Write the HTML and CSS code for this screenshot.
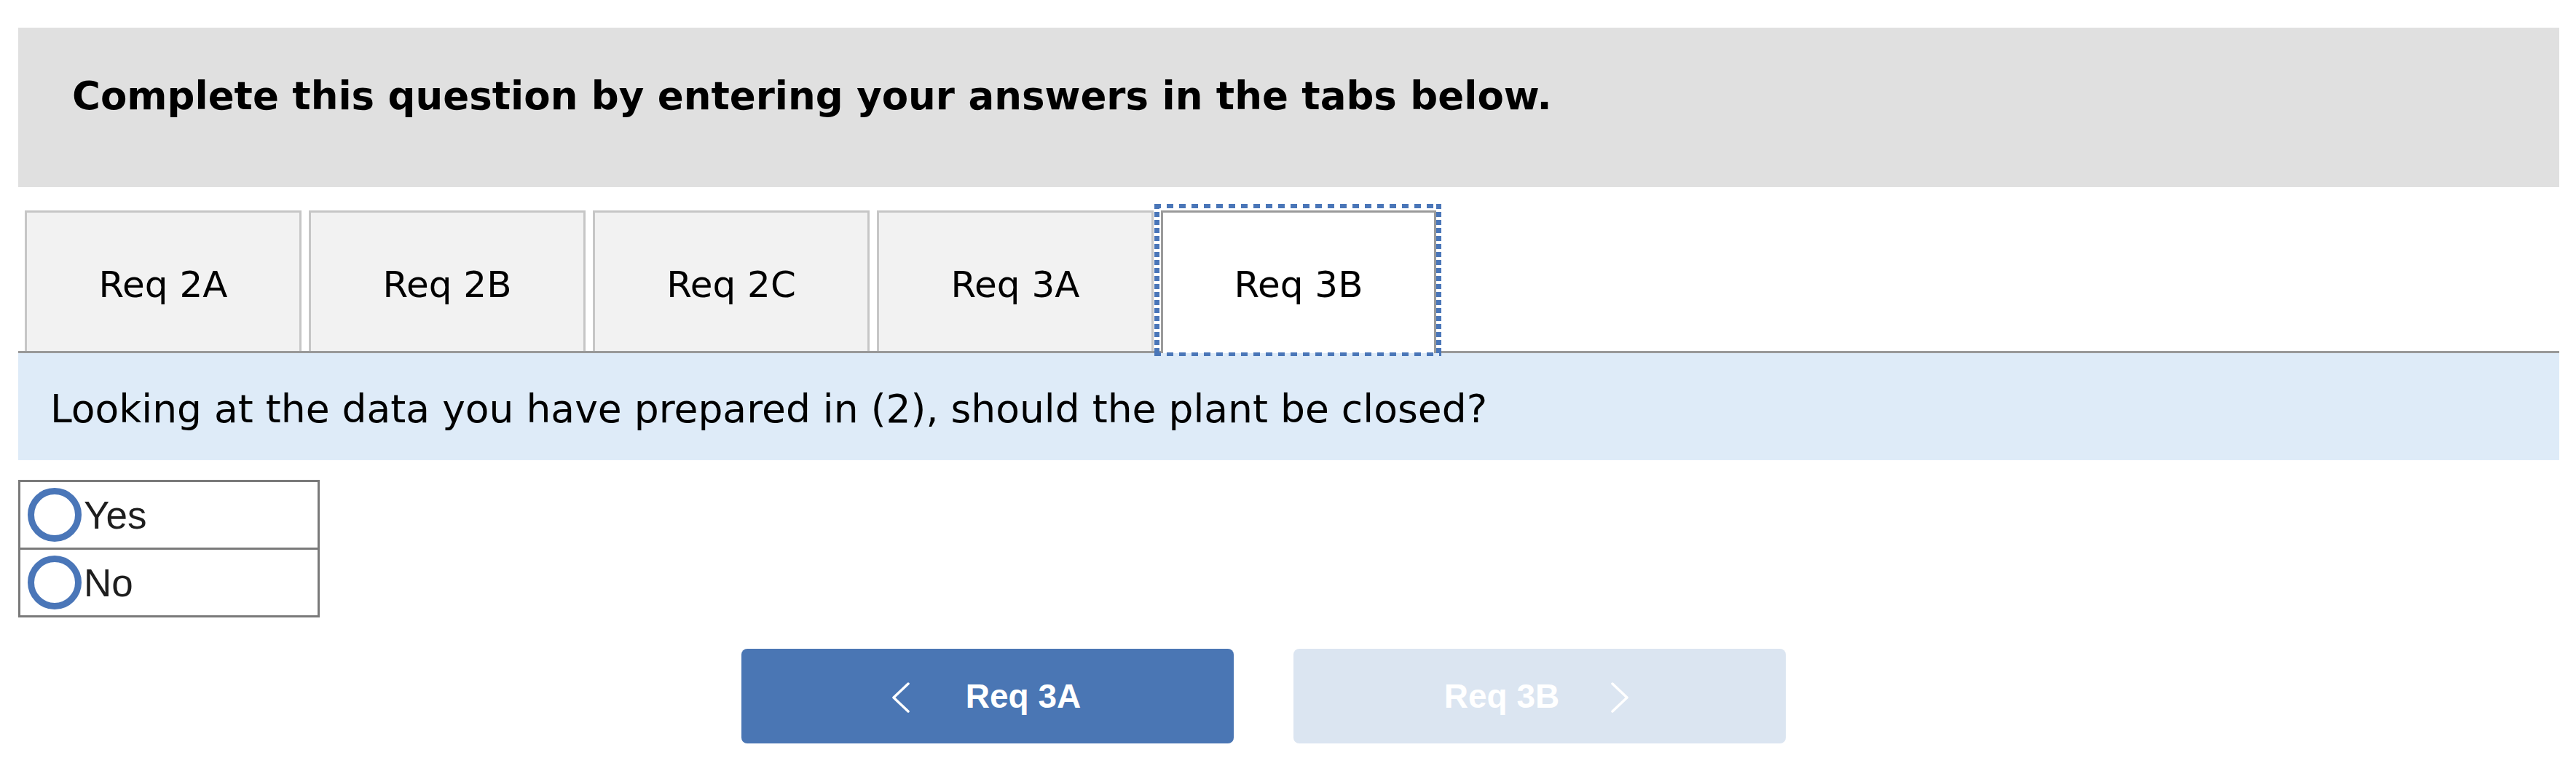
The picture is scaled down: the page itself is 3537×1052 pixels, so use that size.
FILE: index.html
```html
<!DOCTYPE html>
<html lang="en">
<head>
<meta charset="utf-8">
<title>Req 3B</title>
<link rel="stylesheet" href="styles.css">
</head>
<body>
<div class="page">
  <div class="header">Complete this question by entering your answers in the tabs below.</div>

  <div class="tabs">
    <div class="tab">Req 2A</div>
    <div class="tab">Req 2B</div>
    <div class="tab">Req 2C</div>
    <div class="tab">Req 3A</div>
    <div class="tab active">Req 3B</div>
  </div>

  <div class="question">Looking at the data you have prepared in (2), should the plant be closed?</div>

  <div class="choices">
    <label class="choice"><span class="radio"></span><span class="label">Yes</span></label>
    <label class="choice"><span class="radio"></span><span class="label">No</span></label>
  </div>

  <div class="nav">
    <button class="navbtn prev">
      <svg class="chev" width="26" height="42" viewBox="0 0 26 42"><polyline points="23,2 3,21 23,40" fill="none" stroke="#fff" stroke-width="3.5" stroke-linecap="round" stroke-linejoin="round"/></svg>
      <span>Req 3A</span>
    </button>
    <button class="navbtn next">
      <span>Req 3B</span>
      <svg class="chev" width="26" height="42" viewBox="0 0 26 42"><polyline points="3,2 23,21 3,40" fill="none" stroke="#fff" stroke-width="3.5" stroke-linecap="round" stroke-linejoin="round"/></svg>
    </button>
  </div>
</div>
</body>
</html>
```
FILE: styles.css
```css
html, body {
  margin: 0;
  padding: 0;
  background: #fff;
}

.page {
  padding: 38px 23px 0 25px;
  font-family: "DejaVu Sans", Verdana, sans-serif;
  color: #000;
}

.header {
  box-sizing: border-box;
  height: 219px;
  background: #e0e0e0;
  padding: 64px 0 0 74px;
  font-weight: bold;
  font-size: 53px;
  line-height: 60px;
  white-space: nowrap;
}

.tabs {
  display: flex;
  align-items: flex-start;
  gap: 10px;
  margin-top: 32px;
  padding-left: 9px;
  border-bottom: 3px solid #999;
}

.tab {
  box-sizing: border-box;
  width: 380px;
  height: 193px;
  padding-top: 74px;
  background: #f2f2f2;
  border: 3px solid #c6c6c6;
  border-bottom: none;
  text-align: center;
  font-size: 50px;
  line-height: 50px;
  color: #000;
}

.tab.active {
  position: relative;
  width: 378px;
  height: 196px;
  margin-bottom: -3px;
  background: #fff;
  border-color: #9a9a9a;
}

.tab.active::after {
  content: "";
  position: absolute;
  left: -12px;
  right: -10px;
  top: -12px;
  bottom: -4px;
  pointer-events: none;
  background:
    repeating-linear-gradient(90deg, #4a76b8 0 9px, transparent 9px 17px) left top / 100% 6px no-repeat,
    repeating-linear-gradient(90deg, #4a76b8 0 9px, transparent 9px 17px) left bottom / 100% 5px no-repeat,
    repeating-linear-gradient(180deg, #4a76b8 0 7px, transparent 7px 11px) left top / 7px 100% no-repeat,
    repeating-linear-gradient(180deg, #4a76b8 0 7px, transparent 7px 11px) right top / 7px 100% no-repeat;
}

.question {
  box-sizing: border-box;
  height: 147px;
  background: #deebf8;
  padding: 50px 0 0 44px;
  font-size: 53.5px;
  line-height: 54px;
  white-space: nowrap;
}

.choices {
  width: 414px;
  box-sizing: border-box;
  margin-top: 27px;
  border: 3px solid #7a7a7a;
}

.choice {
  display: flex;
  align-items: center;
  height: 90px;
  padding-left: 10px;
  font-family: "Liberation Sans", Arial, sans-serif;
  font-size: 53px;
  color: #1e1e1e;
}

.choice + .choice {
  border-top: 3px solid #7a7a7a;
}

.radio {
  box-sizing: border-box;
  width: 74px;
  height: 74px;
  border: 9px solid #4a76b8;
  border-radius: 50%;
  margin-right: 3px;
  flex: none;
}

.label {
  line-height: 52px;
  padding-top: 2px;
}

.nav {
  display: flex;
  gap: 82px;
  margin-top: 43px;
  padding-left: 993px;
}

.navbtn {
  box-sizing: border-box;
  width: 676px;
  height: 130px;
  border: none;
  border-radius: 8px;
  display: flex;
  align-items: center;
  justify-content: center;
  gap: 76px;
  font-family: "Liberation Sans", Arial, sans-serif;
  font-weight: bold;
  font-size: 46px;
  color: #fff;
  padding: 0;
}

.navbtn.prev {
  background: #4a76b4;
  padding-right: 4px;
}

.navbtn.next {
  background: #dbe5f1;
  gap: 70px;
  padding-right: 8px;
}

.chev {
  display: block;
  margin-top: 4px;
}
```
